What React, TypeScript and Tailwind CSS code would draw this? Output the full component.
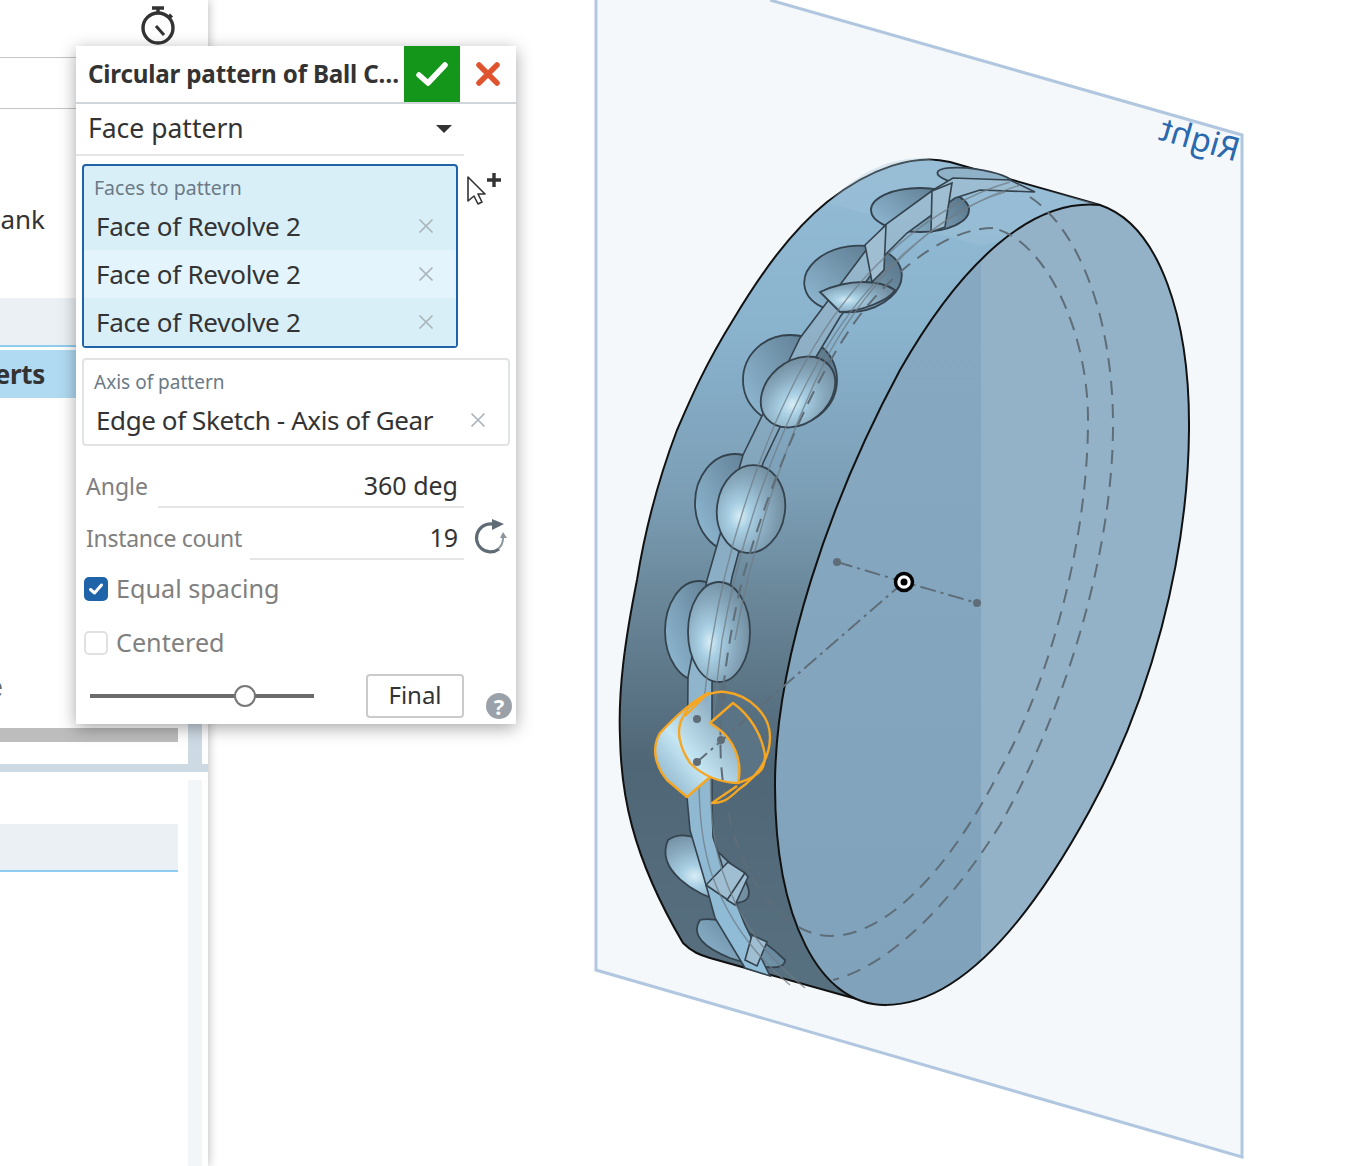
import React from 'react';

const font = "font-['Noto_Sans',sans-serif]";

function CloseX({ className }: { className?: string }) {
  return (
    <svg viewBox="0 0 16 16" className={`w-4 h-4 ${className ?? ''}`} fill="none" stroke="#aab4ba" strokeWidth="1.7">
      <path d="M1.5 1.5 L14.5 14.5 M14.5 1.5 L1.5 14.5" />
    </svg>
  );
}

function Stopwatch() {
  return (
    <svg viewBox="0 0 36 40" className="w-9 h-10" fill="none" stroke="#333" strokeWidth="3.4">
      <circle cx="17" cy="23" r="15" />
      <path d="M11 3 H23 M17 3 V8" />
      <path d="M28 9.5 L31 12.5" strokeWidth="3" />
      <path d="M15 21 L23 30" strokeWidth="3" />
    </svg>
  );
}

function FaceRow({ tone }: { tone: string }) {
  return (
    <div className={`flex items-center justify-between h-12 shrink-0 pl-3 pr-[22px] ${tone}`}>
      <span className="text-[26px] leading-none text-[#333] tracking-[-0.25px]">Face of Revolve 2</span>
      <CloseX />
    </div>
  );
}

function Canvas() {
  const groove = 'M1035 192 L1010 180 L953 178 L933 190 L885 225 L800 338 L743 455 L707 580 L688 677 L687 797 L690 830 L706 885 L715 918 L745 968 L770 976 L745 925 L727 880 L713 837 L712 803 L712 683 L732 577 L763 463 L782 423 L813 362 L840 317 L887 253 L907 233 L955 198 L980 190 Z';
  const faceD = 'M1100 205 C1160 225 1190 320 1189 430 C1188 560 1150 700 1090 810 C1030 920 960 1005 885 1005 C820 1005 775 920 775 785 C775 660 830 500 900 370 C960 265 1030 198 1100 205 Z';
  return (
    <svg viewBox="208 0 1160 1166" className="block w-full h-full">
      <defs>
        <linearGradient id="side" x1="0" y1="160" x2="0" y2="1000" gradientUnits="userSpaceOnUse">
          <stop offset="0" stop-color="#93bbd6" />
          <stop offset="0.2" stop-color="#8ab3ce" />
          <stop offset="0.4" stop-color="#7b9eb5" />
          <stop offset="0.52" stop-color="#6a8799" />
          <stop offset="0.72" stop-color="#4f6676" />
          <stop offset="1" stop-color="#587181" />
        </linearGradient>
        <linearGradient id="front" x1="0" y1="200" x2="0" y2="1005" gradientUnits="userSpaceOnUse">
          <stop offset="0" stop-color="#87aac2" />
          <stop offset="1" stop-color="#80a3bb" />
        </linearGradient>
        <radialGradient id="ball" cx="0.35" cy="0.6" r="0.7">
          <stop offset="0" stop-color="#d8edf5" />
          <stop offset="0.22" stop-color="#a9d0e4" />
          <stop offset="0.6" stop-color="#88a9be" />
          <stop offset="1" stop-color="#6f8a9c" />
        </radialGradient>
        <linearGradient id="cup" x1="0" y1="0.8" x2="1" y2="0.2">
          <stop offset="0" stop-color="#8fb8d2" />
          <stop offset="1" stop-color="#577488" />
        </linearGradient>
        <linearGradient id="shine" x1="0" y1="1" x2="1" y2="0">
          <stop offset="0" stop-color="#7ea6c0" />
          <stop offset="0.4" stop-color="#c5e6f3" />
          <stop offset="1" stop-color="#6f8fa5" />
        </linearGradient>
        <linearGradient id="channel" x1="0" y1="180" x2="0" y2="980" gradientUnits="userSpaceOnUse">
          <stop offset="0" stop-color="#9cbdd2" />
          <stop offset="0.35" stop-color="#84a6bc" />
          <stop offset="0.6" stop-color="#8fb4cc" />
          <stop offset="1" stop-color="#90bdd8" />
        </linearGradient>
        <clipPath id="faceClip">
          <path d={faceD} />
        </clipPath>
      </defs>

      <path d="M596 -5 L596 970 L1242 1157 L1242 135 L770 0 Z" fill="#f4f8fb" />
      <path d="M596 0 L596 970 L1242 1157 L1242 135 L770 0" fill="none" stroke="#b1c7df" strokeWidth="3" />
      <g transform="translate(1238 154) rotate(16) scale(-1 1)">
        <text x="0" y="8" fontFamily="Noto Sans, sans-serif" fontSize="33" fill="#2a69ad">Right</text>
      </g>

      {/* body */}
      <path
        d="M1100 205 L950 162 C915 153 870 168 827 202 C790 232 760 275 733 320 C705 365 690 400 677 430 C660 475 645 530 637 580 C625 640 618 690 620 737 C621 790 630 853 683 943 C692 952 700 955 710 958 L853 998 L885 1005 Z"
        fill="url(#side)"
        stroke="#111"
        strokeWidth="2"
      />
      <path d="M828 203 C860 170 890 158 925 158 L1102 205 L982 246 Z" fill="#a4c5da" opacity="0.35" />

      {/* channel and ball pockets */}
      <g stroke="#34434e" strokeWidth="1.8">
        <ellipse cx="975" cy="178" rx="38" ry="9" fill="#8fb2c8" transform="rotate(8 975 178)" />
        <ellipse cx="920" cy="210" rx="49" ry="22" fill="url(#cup)" />
        <ellipse cx="853" cy="279" rx="49" ry="33" fill="url(#cup)" transform="rotate(-8 853 279)" />
        <ellipse cx="790" cy="380" rx="47" ry="45" fill="url(#cup)" />
        <ellipse cx="735" cy="503" rx="40" ry="49" fill="url(#cup)" />
        <ellipse cx="699" cy="631" rx="34" ry="50" fill="url(#cup)" />
        <path d="M668 840 C690 825 720 850 745 880 C755 900 745 905 725 902 C695 895 655 870 668 840 Z" fill="url(#ball)" />
        <path d="M700 920 C720 915 760 935 785 960 C785 972 760 968 730 958 C705 948 690 935 700 920 Z" fill="url(#cup)" />
      </g>
      <path d={groove} fill="url(#channel)" stroke="#34434e" strokeWidth="1.6" />
      <g stroke="#34434e" strokeWidth="1.8">
        <path d="M820 292 C850 278 880 280 895 290 C890 300 860 312 840 312 Z" fill="url(#ball)" />
        <ellipse cx="798" cy="392" rx="41" ry="31" fill="url(#ball)" transform="rotate(-40 798 392)" />
        <ellipse cx="751" cy="509" rx="34" ry="44" fill="url(#ball)" transform="rotate(8 751 509)" />
        <ellipse cx="719" cy="632" rx="31" ry="50" fill="url(#ball)" />
      </g>
      <g fill="#9fbed2" stroke="#34434e" strokeWidth="1.6">
        <path d="M932 191 L952 183 L945 227 L931 232 Z" />
        <path d="M865 245 L886 225 L884 270 L872 282 Z" />
        <path d="M728 862 L745 873 L728 900 L706 885 Z" />
        <path d="M745 873 L748 877 L735 905 L727 900 Z" />
        <path d="M752 935 L767 942 L757 966 L745 960 Z" />
      </g>
      <g fill="none" stroke="#6f7c85" strokeWidth="1.4" opacity="0.75">
        <path d="M1010 182 C930 205 860 270 815 345 C770 420 730 530 712 640 C700 720 690 810 712 875 C730 925 760 960 790 985" />
        <path d="M1020 185 C940 210 870 275 825 350 C780 425 740 535 722 640 C712 720 702 810 722 870 C740 925 770 960 805 988" />
        <path d="M1005 192 C935 212 870 280 828 355 C790 430 755 530 735 640" />
      </g>

      {/* front face */}
      <path d={faceD} fill="url(#front)" />
      <rect x="981" y="190" width="220" height="820" fill="#93b2c7" clipPath="url(#faceClip)" />
      <path d={faceD} fill="none" stroke="#111" strokeWidth="2" />

      {/* selected pocket fills */}
      <path d="M733 703 C750 715 762 735 765 755 L763 770 L738 783 C742 765 737 750 728 738 C722 730 716 727 710 723 Z" fill="#5a7486" />
      <path d="M708 693 C690 703 672 720 660 733 C650 750 657 768 667 780 L687 797 L710 777 C720 781 730 783 738 783 C742 765 737 750 728 738 C722 730 716 727 710 723 Z" fill="url(#shine)" />

      {/* sketch lines */}
      <g fill="none" stroke="#5e6d78" strokeWidth="2" strokeDasharray="14 9">
        <path d="M993 228 C955 228 905 258 860 315 C815 375 770 480 743 577 C725 650 712 745 727 803 C735 860 770 925 820 935 C880 945 950 870 1000 770 C1050 680 1088 540 1088 420 C1088 330 1045 240 993 228 Z" />
        <path d="M1030 197 C1080 230 1113 320 1113 425 C1113 560 1060 720 1000 825 C950 905 890 965 833 980" />
      </g>
      <g fill="none" stroke="#5e6d78" strokeWidth="2" strokeDasharray="16 5 3 5">
        <path d="M837 562 L904 582 L977 603" />
        <path d="M904 582 L785 685 L697 762" />
      </g>
      <g fill="#5e6d78">
        <circle cx="837" cy="562" r="4" />
        <circle cx="977" cy="603" r="4" />
        <circle cx="697" cy="762" r="4" />
        <circle cx="721" cy="740" r="4" />
        <circle cx="697" cy="719" r="4" />
        <circle cx="722" cy="697" r="4" />
      </g>
      <circle cx="904" cy="582" r="8.5" fill="#fff" stroke="#000" strokeWidth="3.5" />
      <circle cx="904" cy="582" r="3.5" fill="#000" />

      {/* selected pocket outline */}
      <g fill="none" stroke="#f5a623" strokeWidth="2.4" strokeLinejoin="round">
        <path d="M708 693 C690 703 672 720 660 733 C650 750 657 768 667 780 L687 797 L710 777 C720 781 730 783 738 783 C742 765 737 750 728 738 C722 730 716 727 710 723 L733 703 C750 715 762 735 765 755 C765 765 764 775 738 783" />
        <path d="M683 717 C675 730 680 748 690 763 C697 770 704 774 710 777" />
        <path d="M683 717 L688 708 L708 693 L685 716" />
        <path d="M690 705 C705 693 718 691 725 692 C750 695 770 715 770 737 C770 760 755 778 738 790 C728 800 722 803 712 803 L737 786" />
      </g>
    </svg>
  );
}

export default function App() {
  return (
    <div className={`relative flex w-[1368px] h-[1166px] overflow-hidden bg-white ${font}`}>
      {/* Left panel */}
      <div className="flex flex-col w-[208px] shrink-0 bg-white shadow-[0_0_10px_rgba(0,0,0,0.3)] z-10">
        <div className="flex h-[764px]">
          <div className="w-[178px] shrink-0 flex flex-col">
            <div className="flex justify-end h-[58px] border-b border-[#c4c4c4] pt-[5px] pr-[1px]">
              <Stopwatch />
            </div>
            <div className="h-[51px] border-b border-[#c4c4c4]" />
            <div className="h-[189px] flex items-start overflow-hidden">
              <div className="w-[45px] flex justify-end mt-[92px] text-[26px] leading-9 text-[#333] overflow-hidden">
                <span className="whitespace-nowrap">Blank</span>
              </div>
            </div>
            <div className="h-[47px] bg-[#ebf0f4]" />
            <div className="h-[2px] bg-[#8fcdf0]" />
            <div className="h-[3px]" />
            <div className="h-[48px] bg-[#b0daf2] flex items-center">
              <div className="w-[45px] flex justify-end overflow-hidden text-[26px] font-bold text-[#333] tracking-[-0.3px]">
                <span className="whitespace-nowrap">Inserts</span>
              </div>
            </div>
            <div className="h-[330px] flex items-end overflow-hidden">
              <div className="w-[3px] flex justify-end overflow-hidden text-[26px] leading-9 text-[#666] mb-[24px]">
                <span className="whitespace-nowrap">Table</span>
              </div>
            </div>
            <div className="h-[14px] bg-[#bdbdbd]" />
          </div>
          <div className="w-[14px] ml-[10px] mt-[58px] bg-[#cdd9e3]" />
        </div>
        <div className="h-2 bg-[#cdd9e3]" />
        <div className="flex flex-1">
          <div className="w-[178px] shrink-0 pt-[52px]">
            <div className="h-[48px] bg-[#ebf0f4] border-b-2 border-[#8fcdf0]" />
          </div>
          <div className="w-[14px] ml-[10px] mt-2 bg-[#f3f6f9]" />
        </div>
      </div>

      {/* Viewport */}
      <div className="flex-1 h-full">
        <Canvas />
      </div>

      {/* Feature dialog */}
      <div className="absolute left-[76px] top-[46px] w-[440px] h-[678px] z-20 bg-white shadow-[0_4px_16px_rgba(0,0,0,0.35)]">
        <div className="flex items-center h-[58px] border-b-2 border-[#d0d5d9]">
          <div className="w-[328px] pl-3 text-[24.2px] font-bold text-[#333] whitespace-nowrap tracking-[-0.2px]">Circular pattern of Ball C…</div>
          <div className="w-14 h-14 bg-[#14961a] flex items-center justify-center self-start">
            <svg viewBox="0 0 32 26" className="w-8 h-[26px]" fill="none" stroke="#fff" strokeWidth="5.5" strokeLinecap="round" strokeLinejoin="round">
              <path d="M3 14 L12 22 L29 4" />
            </svg>
          </div>
          <div className="w-14 flex justify-center">
            <svg viewBox="0 0 24 24" className="w-6 h-6" fill="none" stroke="#e0532f" strokeWidth="5.5" strokeLinecap="round">
              <path d="M3 3 L21 21 M21 3 L3 21" />
            </svg>
          </div>
        </div>

        <div className="flex items-center justify-between w-[388px] h-[52px] pl-3 pr-3 border-b-2 border-[#e3e5e7]">
          <span className="text-[26.5px] text-[#333]">Face pattern</span>
          <div className="w-0 h-0 border-x-[8px] border-x-transparent border-t-[8px] border-t-[#333]" />
        </div>

        <div className="flex mt-2 ml-[6px]">
          <div className="w-[376px] h-[184px] border-2 border-[#1f63a8] rounded bg-[#d9eff8] flex flex-col">
            <div className="h-[36px] shrink-0 pl-[10px] pt-[10px] text-[19.5px] leading-6 text-[#6b7a85]">Faces to pattern</div>
            <FaceRow tone="bg-[#d9eff8]" />
            <FaceRow tone="bg-[#e3f4fc]" />
            <FaceRow tone="bg-[#d9eff8]" />
          </div>
          <svg viewBox="0 0 38 34" className="w-[38px] h-[34px] ml-2 mt-[8px]">
            <path d="M2 5 L2 29 L8 24 L12 32 L16 30 L12 22 L19 22 Z" fill="#fff" stroke="#333" strokeWidth="1.6" strokeLinejoin="round" />
            <path d="M21 8 H35 M28 1 V15" stroke="#333" strokeWidth="3.4" fill="none" />
          </svg>
        </div>

        <div className="ml-[6px] mt-[10px] w-[428px] h-[88px] border-2 border-[#e1e3e5] rounded flex flex-col">
          <div className="h-[36px] pl-[10px] pt-[10px] text-[19px] leading-6 text-[#6b7a85]">Axis of pattern</div>
          <div className="flex items-center justify-between h-12 pl-3 pr-[22px]">
            <span className="text-[26px] leading-none text-[#333] tracking-[-0.4px]">Edge of Sketch - Axis of Gear</span>
            <CloseX />
          </div>
        </div>

        <div className="flex items-end ml-[10px] mt-[14px] h-[48px] w-[378px]">
          <span className="w-[72px] text-[23px] leading-[44px] text-[#808080] whitespace-nowrap">Angle</span>
          <div className="flex-1 h-[48px] flex items-center justify-end border-b-2 border-[#e3e5e7] text-[25px] text-[#333] pt-[6px] pr-[6px]">360 deg</div>
        </div>
        <div className="flex items-end ml-[10px] mt-[4px] h-[48px]">
          <span className="w-[164px] text-[23px] leading-[44px] text-[#808080] tracking-[-0.3px] whitespace-nowrap">Instance count</span>
          <div className="w-[214px] h-[48px] flex items-center justify-end border-b-2 border-[#e3e5e7] text-[25px] text-[#333] pt-[6px] pr-[6px]">19</div>
          <svg viewBox="0 0 34 36" className="w-[34px] h-9 ml-[10px] mb-[6px]" fill="none">
            <path d="M22 7 A14 14 0 1 0 25 31" stroke="#5f6b75" strokeWidth="3.2" />
            <path d="M18 1 L30 6 L18 12 Z" fill="#5f6b75" />
            <path d="M29 20 A14 14 0 0 1 24 31" stroke="#8b959d" strokeWidth="2" />
            <path d="M26 20 L33 20 L29 14 Z" fill="#8b959d" />
          </svg>
        </div>

        <div className="flex items-center ml-2 mt-[2px] h-[54px]">
          <div className="w-6 h-6 rounded-[5px] bg-[#1f63a8] flex items-center justify-center">
            <svg viewBox="0 0 16 16" className="w-4 h-4" fill="none" stroke="#fff" strokeWidth="3" strokeLinecap="round" strokeLinejoin="round">
              <path d="M2.5 8.5 L6.5 12 L13.5 4" />
            </svg>
          </div>
          <span className="ml-2 text-[25.2px] text-[#808080]">Equal spacing</span>
        </div>
        <div className="flex items-center ml-2 h-[54px]">
          <div className="w-6 h-6 rounded-[5px] border-2 border-[#dfe1e3] bg-white" />
          <span className="ml-2 text-[25.2px] text-[#808080]">Centered</span>
        </div>

        <div className="flex items-center mt-[3px]">
          <div className="relative w-[224px] h-1 ml-[14px] bg-[#6b6b6b]">
            <div className="absolute left-[144px] -top-[9px] w-[22px] h-[22px] rounded-full bg-white border-2 border-[#777]" />
          </div>
          <div className="ml-[52px] w-[98px] h-11 border-2 border-[#cbcbcb] rounded flex items-center justify-center text-[24px] text-[#333] pb-[2px]">Final</div>
          <div className="ml-[22px] mt-5 w-[26px] h-[26px] rounded-full bg-[#9aa1a8] flex items-center justify-center text-[22px] font-bold text-white leading-none">?</div>
        </div>
      </div>
    </div>
  );
}
